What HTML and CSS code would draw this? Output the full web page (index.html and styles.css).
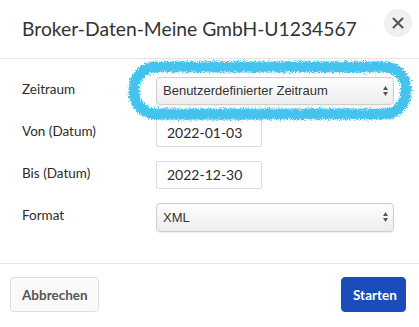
FILE: index.html
```html
<!DOCTYPE html>
<html lang="de">
<head>
<meta charset="utf-8">
<title>Broker-Daten</title>
<link rel="stylesheet" href="styles.css">
</head>
<body>
<div class="dialog">
  <header class="header">
    <h1 class="title">Broker-Daten-Meine GmbH-U1234567</h1>
    <button class="close" type="button" aria-label="Schließen">
      <svg width="12" height="12" viewBox="0 0 12 12"><path d="M1.5 1.5 L10.5 10.5 M10.5 1.5 L1.5 10.5" stroke="#555" stroke-width="2" stroke-linecap="round"/></svg>
    </button>
  </header>
  <main class="body">
    <svg class="scribble" width="296" height="66" viewBox="0 0 296 66">
      <defs>
        <filter id="rough" x="-5%" y="-20%" width="110%" height="140%">
          <feTurbulence type="fractalNoise" baseFrequency="1.2" numOctaves="2" seed="5" result="n"/>
          <feDisplacementMap in="SourceGraphic" in2="n" scale="7" xChannelSelector="R" yChannelSelector="G"/>
        </filter>
      </defs>
      <rect x="12" y="8" width="272" height="47" rx="22" ry="22" fill="none" stroke="#45c3ef" stroke-width="11" filter="url(#rough)"/>
    </svg>
    <div class="row">
      <label class="label">Zeitraum</label>
      <div class="select-wrap">
        <div class="select">Benutzerdefinierter Zeitraum</div>
        <svg class="arrows" width="7" height="12" viewBox="0 0 7 12"><path d="M3.5 1 L6 5 L1 5 Z M1 7 L6 7 L3.5 11 Z" fill="#555"/></svg>
      </div>
    </div>
    <div class="row">
      <label class="label">Von (Datum)</label>
      <div class="input">2022-01-03</div>
    </div>
    <div class="row">
      <label class="label">Bis (Datum)</label>
      <div class="input">2022-12-30</div>
    </div>
    <div class="row">
      <label class="label">Format</label>
      <div class="select-wrap">
        <div class="select">XML</div>
        <svg class="arrows" width="7" height="12" viewBox="0 0 7 12"><path d="M3.5 1 L6 5 L1 5 Z M1 7 L6 7 L3.5 11 Z" fill="#555"/></svg>
      </div>
    </div>
  </main>
  <footer class="footer">
    <button class="btn btn-cancel" type="button">Abbrechen</button>
    <button class="btn btn-primary" type="button">Starten</button>
  </footer>
</div>
</body>
</html>
```

FILE: styles.css
```css
* { box-sizing: border-box; }
html, body { margin: 0; padding: 0; background: #fff; }
body {
  font-family: "Lato", "Open Sans", sans-serif;
  color: #2b2b2b;
  width: 419px;
  height: 327px;
  overflow: hidden;
}
.dialog { width: 419px; }
.header {
  height: 59px;
  display: flex;
  align-items: flex-start;
  justify-content: space-between;
  padding: 0 7px 0 22px;
  border-bottom: 1px solid #e4e4e4;
}
.title {
  margin: 17px 0 0 0;
  font-size: 19.3px;
  font-weight: 400;
  color: #333;
  line-height: 24px;
}
.close {
  margin-top: 9px;
  width: 28px;
  height: 28px;
  border-radius: 50%;
  border: none;
  background: #f0f0f0;
  padding: 0;
  display: flex;
  align-items: center;
  justify-content: center;
}
.body {
  position: relative;
  height: 204px;
  padding: 18px 25px 0 22px;
  display: flex;
  flex-direction: column;
  gap: 14px;
}
.row {
  display: flex;
  align-items: flex-start;
}
.label {
  width: 134px;
  flex: none;
  font-size: 13.5px;
  line-height: 16px;
  padding-top: 4px;
  color: #2b2b2b;
}
.select-wrap {
  position: relative;
  width: 238px;
}
.select {
  height: 28px;
  border: 1px solid #cfcfcf;
  border-radius: 4px;
  background: linear-gradient(#fefefe, #ededed);
  box-shadow: 0 1px 1px rgba(0,0,0,0.06), inset 0 0 2px rgba(0,0,0,0.04);
  font-family: "Liberation Sans", Arial, sans-serif;
  font-size: 13px;
  line-height: 26px;
  padding-left: 6px;
  color: #333;
}
.row:last-child .select { height: 29px; line-height: 27px; }
.arrows {
  position: absolute;
  right: 5px;
  top: 8px;
}
.input {
  width: 106px;
  height: 28px;
  border: 1px solid #dcdcdc;
  border-radius: 2px;
  font-size: 14px;
  line-height: 26px;
  padding-left: 10px;
  color: #2b2b2b;
}
.scribble {
  position: absolute;
  left: 122px;
  top: 0;
  pointer-events: none;
}
.footer {
  border-top: 1px solid #e4e4e4;
  display: flex;
  justify-content: space-between;
  padding: 13px 13px 0 10px;
}
.btn {
  height: 35px;
  border-radius: 4px;
  font-family: "Lato", "Open Sans", sans-serif;
  font-size: 13.5px;
  font-weight: 700;
  padding: 0 11px;
}
.btn-cancel {
  width: 89px;
  background: #fafafa;
  border: 1px solid #dedede;
  color: #555;
}
.btn-primary {
  width: 65px;
  background: #1a4db9;
  border: 1px solid #1a4db9;
  color: #fff;
}
```
